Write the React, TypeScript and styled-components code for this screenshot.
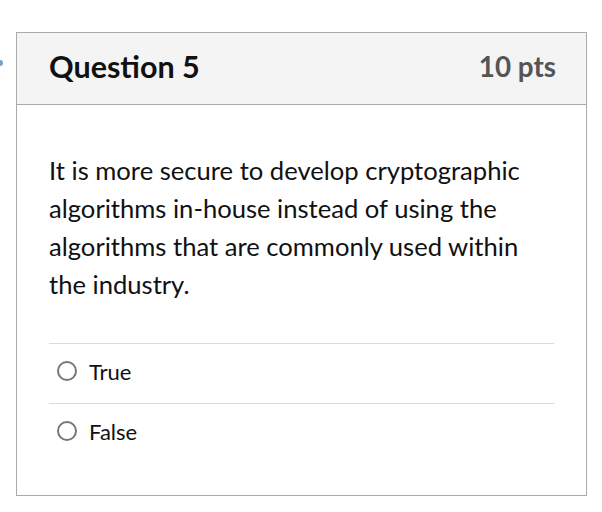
import styled, { createGlobalStyle } from "styled-components"

const GlobalStyle = createGlobalStyle`
  html, body {
    margin: 0;
    padding: 0;
    background: #ffffff;
    font-family: Lato, "Open Sans", sans-serif;
  }
`

const Page = styled.div`
  width: 602px;
  height: 512px;
  padding: 32px 15px 0 16px;
  box-sizing: border-box;
  position: relative;
`

const EdgeDot = styled.div`
  position: absolute;
  left: -3px;
  top: 60px;
  width: 6px;
  height: 6px;
  border-radius: 50%;
  background: #7a9fc4;
`

const Card = styled.div`
  border: 1px solid #ababab;
  height: 464px;
  box-sizing: border-box;
  display: flex;
  flex-direction: column;
`

const Header = styled.header`
  height: 72px;
  box-sizing: border-box;
  background: #f4f4f4;
  border-bottom: 1px solid #ababab;
  display: flex;
  align-items: center;
  justify-content: space-between;
  padding: 0 30px 5px 32px;
`

const Title = styled.h2`
  margin: 0;
  font-size: 30.5px;
  font-weight: 700;
  color: #111;
`

const Points = styled.div`
  font-size: 27.8px;
  font-weight: 700;
  color: #555;
`

const Body = styled.div`
  padding: 46px 32px 0 32px;
`

const Prompt = styled.p`
  margin: 0 0 40px 0;
  font-size: 25.6px;
  line-height: 38px;
  color: #111;
`

const Answer = styled.label`
  display: flex;
  align-items: center;
  gap: 12px;
  height: 60px;
  border-top: 1px solid #dcdcdc;
  padding: 0 0 5px 8px;
  box-sizing: border-box;
  font-size: 22px;
  color: #111;
`

const Radio = styled.span`
  width: 16px;
  height: 16px;
  border: 2px solid #777;
  border-radius: 50%;
  flex-shrink: 0;
`

const answers = ["True", "False"]

export default function App() {
  return (
    <Page>
      <GlobalStyle />
      <EdgeDot />
      <Card>
        <Header>
          <Title>Question 5</Title>
          <Points>10 pts</Points>
        </Header>
        <Body>
          <Prompt>
            It is more secure to develop cryptographic algorithms in-house instead of using the
            algorithms that are commonly used within the industry.
          </Prompt>
          {answers.map(a => (
            <Answer key={a}>
              <Radio />
              {a}
            </Answer>
          ))}
        </Body>
      </Card>
    </Page>
  )
}
